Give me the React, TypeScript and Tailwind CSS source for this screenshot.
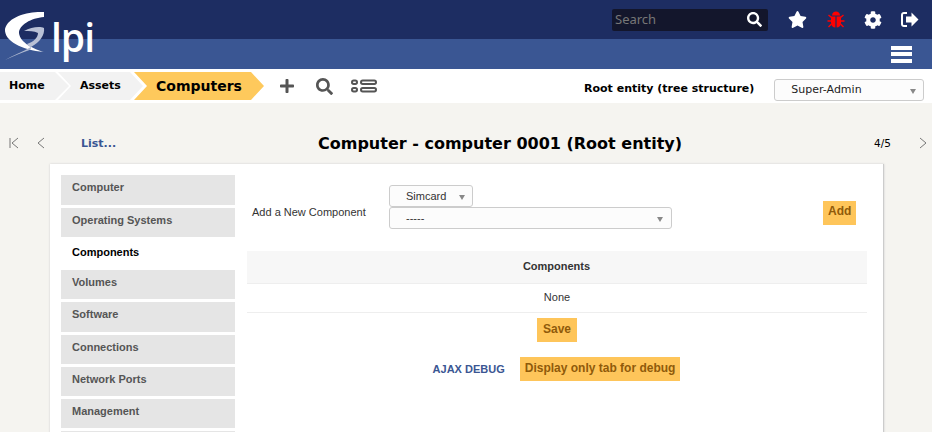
import { FaCog, FaSearch, FaStar, FaPlus } from 'react-icons/fa'

const dejavu = 'font-["DejaVu_Sans",sans-serif]'

const tabs = [
  { label: 'Computer' },
  { label: 'Operating Systems' },
  { label: 'Components', active: true },
  { label: 'Volumes' },
  { label: 'Software' },
  { label: 'Connections' },
  { label: 'Network Ports' },
  { label: 'Management' },
  { label: '' },
]

function Logo() {
  return (
    <div className="absolute left-0 top-0 h-[65px] w-[100px]">
      <svg width="50" height="65" viewBox="0 0 50 65" className="absolute left-0 top-0">
        <path d="M44 12 C30 11 8 16 5 29 C4 41 22 50 44 52 C34 49 20 43 19 33 C19 25 31 18 44 17 Z" fill="#fff" />
        <path d="M24 31 C31 27 40 26 44 28 C45 35 40 42 31 47 C29 46 28 46 27 44 C34 42 38 37 38 33 C34 31 29 31 24 31 Z" fill="#b9c1d6" />
        <path d="M5 60 C14 55 22 52 31 47 C32 49 28 51 24 52 C17 55 11 57 5 60 Z" fill="#aeb8d0" />
      </svg>
      <span className="absolute left-[51px] top-[15px] text-[39px] font-semibold leading-[44px] tracking-[-1px] text-white font-['Open_Sans',sans-serif]">lpi</span>
    </div>
  )
}

function Caret() {
  return <span className="mt-[2px] h-0 w-0 border-x-[3px] border-t-[5px] border-x-transparent border-t-[#888]" />
}

function Bug() {
  return (
    <svg width="18" height="17" viewBox="0 0 18 17" fill="#f00" stroke="#f00">
      <path d="M5 4.5 C5 2 7 0.5 9 0.5 C11 0.5 13 2 13 4.5 Z" stroke="none" />
      <path d="M4 5.5 H8.4 V16.5 C6 16.5 4 14.5 4 12 Z M14 5.5 H9.6 V16.5 C12 16.5 14 14.5 14 12 Z" stroke="none" />
      <path d="M4.5 6.5 L1.5 4 M13.5 6.5 L16.5 4 M4 10 H0.5 M14 10 H17.5 M4.5 13 L1.5 16 M13.5 13 L16.5 16" strokeWidth="1.4" fill="none" />
    </svg>
  )
}

function SignOut() {
  return (
    <svg width="18" height="15" viewBox="0 0 18 15" fill="#fff">
      <path d="M6 0 H3 C1.3 0 0 1.3 0 3 V12 C0 13.7 1.3 15 3 15 H6 V13 H3 C2.4 13 2 12.6 2 12 V3 C2 2.4 2.4 2 3 2 H6 Z" />
      <path d="M10.5 0.6 L17.5 7.5 L10.5 14.4 V10.5 H5 V4.5 H10.5 Z" />
    </svg>
  )
}

export default function App() {
  return (
    <div className="relative h-[432px] w-[932px] overflow-hidden bg-[#f5f4f0] font-['Liberation_Sans',sans-serif]">
      <Logo />

      {/* top bars */}
      <div className="flex h-[39px] items-center bg-[#1d2d62] pl-[612px]">
        <div className="flex h-[22px] w-[156px] items-center justify-between rounded-[2px] bg-[#13162c] pl-[3px] pr-[6px]">
          <span className="text-[13px] text-[#777] font-['Noto_Sans',sans-serif]">Search</span>
          <FaSearch className="text-[15px] text-white" />
        </div>
        <FaStar className="ml-[20px] text-[19px] text-white" />
        <span className="ml-[20px]"><Bug /></span>
        <FaCog className="ml-[19px] text-[18px] text-white" />
        <span className="ml-[19px]"><SignOut /></span>
      </div>
      <div className="flex h-[30px] items-center justify-end bg-[#3a5693] pr-[20px]">
        <div className="flex w-[21px] flex-col gap-[2.5px]">
          <div className="h-[4px] bg-white" />
          <div className="h-[4px] bg-white" />
          <div className="h-[4px] bg-white" />
        </div>
      </div>

      {/* breadcrumb row */}
      <div className="flex h-[34px] items-center bg-white">
        <div className={`flex h-[28px] w-[69px] items-center bg-[#f2f2f2] pl-[9px] text-[11px] font-bold text-black [clip-path:polygon(0_0,55px_0,69px_50%,55px_100%,0_100%)] ${dejavu}`}>Home</div>
        <div className={`-ml-[11px] flex h-[28px] w-[85px] items-center bg-[#f2f2f2] pl-[22px] text-[11px] font-bold text-black [clip-path:polygon(0_0,72px_0,85px_50%,72px_100%,0_100%,13px_50%)] ${dejavu}`}>Assets</div>
        <div className={`-ml-[9px] flex h-[28px] w-[130px] items-center bg-[#fec95c] pl-[22px] text-[14px] font-bold text-black [clip-path:polygon(0_0,117px_0,130px_50%,117px_100%,0_100%,13px_50%)] ${dejavu}`}>Computers</div>
        <FaPlus className="ml-[15px] text-[16px] text-[#555]" />
        <FaSearch className="ml-[21px] text-[17px] text-[#555]" />
        <svg width="26" height="14" viewBox="0 0 26 14" className="ml-[18px]" fill="none" stroke="#555" strokeWidth="2">
          <rect x="1" y="1.5" width="5" height="3.5" rx="1.7" />
          <rect x="1" y="9" width="5" height="3.5" rx="1.7" />
          <rect x="10" y="1.5" width="15" height="3.5" rx="1.7" />
          <rect x="10" y="9" width="15" height="3.5" rx="1.7" />
        </svg>
        <span className={`ml-[207px] mt-[6px] text-[11px] font-bold text-black ${dejavu}`}>Root entity (tree structure)</span>
        <div className={`ml-[20px] mt-[8px] flex h-[22px] w-[150px] items-center justify-between rounded-[3px] border border-[#ccc] bg-[#fcfcfc] pl-[16px] pr-[7px] pt-[1px] text-[11px] text-[#222] ${dejavu}`}>
          Super-Admin
          <Caret />
        </div>
      </div>

      {/* title row */}
      <div className="flex h-[61px] items-center pl-[8px] pt-[19px]">
        <svg width="12" height="12" viewBox="0 0 12 12" fill="none" stroke="#777" strokeWidth="1">
          <path d="M2 1 V11 M10 1 L4 6 L10 11" />
        </svg>
        <svg width="12" height="12" viewBox="0 0 12 12" fill="none" stroke="#777" strokeWidth="1" className="ml-[15px]">
          <path d="M9 1 L3 6 L9 11" />
        </svg>
        <span className={`ml-[34px] mt-[2px] w-[237px] text-[11px] font-bold text-[#3a5693] ${dejavu}`}>List...</span>
        <span className={`mt-[2px] w-[556px] text-[16px] font-bold text-black ${dejavu}`}>Computer - computer 0001 (Root entity)</span>
        <span className={`mt-[2px] text-[10.5px] text-black ${dejavu}`}>4/5</span>
        <svg width="12" height="12" viewBox="0 0 12 12" fill="none" stroke="#777" strokeWidth="1" className="ml-[26px]">
          <path d="M3 1 L9 6 L3 11" />
        </svg>
      </div>

      {/* card */}
      <div className="ml-[50px] flex h-[300px] w-[834px] gap-[12px] border-r border-[#ccc] bg-white pl-[11px] pr-[15px] pt-[11.4px] shadow-[0_0_2px_#ccc]">
        <div className="flex w-[174px] flex-col gap-[3px]">
          {tabs.map((tab, i) =>
            tab.active ? (
              <div key={i} className="h-[27px] pl-[11px] pt-[5px] text-[11px] font-bold leading-[14px] text-black">{tab.label}</div>
            ) : (
              <div key={i} className="h-[29.3px] shrink-0 bg-[#e5e5e5] pl-[11px] pt-[5px] text-[11px] font-bold leading-[14px] text-[#555]">{tab.label}</div>
            )
          )}
        </div>

        <div className="w-[620px]">
          <div className="flex h-[76px] items-center pl-[5px] text-[11px] text-[#333]">
            <span className="mt-[-2px] w-[137px]">Add a New Component</span>
            <div className="-mt-[12px] flex w-[283px] flex-col">
              <div className="flex h-[22px] w-[84px] items-center justify-between rounded-[3px] border border-[#ccc] bg-[#fcfcfc] pl-[16px] pr-[7px]">
                Simcard
                <Caret />
              </div>
              <div className="flex h-[22px] items-center justify-between rounded-[3px] border border-[#ccc] bg-[#fcfcfc] pl-[16px] pr-[8px]">
                -----
                <Caret />
              </div>
            </div>
            <button className="ml-[151px] mt-[-1px] h-[24px] bg-[#fec55a] px-[5px] pb-[3px] text-[12px] font-bold text-[#8f5a0a]">Add</button>
          </div>
          <div className="flex h-[33px] items-center justify-center border-b border-[#eee] bg-[#f7f7f7] pb-[2px] pr-[1px] text-[11px] font-bold text-[#333]">Components</div>
          <div className="flex h-[29px] items-center justify-center border-b border-[#eee] pb-[2px] text-[11px] text-[#333]">None</div>
          <div className="mt-[5px] flex justify-center">
            <button className="h-[24px] bg-[#fec55a] px-[5.5px] pb-[3px] text-[12px] font-bold text-[#8f5a0a]">Save</button>
          </div>
          <div className="mt-[15px] flex items-center justify-center gap-[15px] pr-[1px]">
            <span className="text-[11px] font-bold text-[#3a5693]">AJAX DEBUG</span>
            <button className="h-[24px] bg-[#fec55a] px-[5px] pb-[3px] text-[12px] font-bold text-[#8f5a0a]">Display only tab for debug</button>
          </div>
        </div>
      </div>
    </div>
  )
}
